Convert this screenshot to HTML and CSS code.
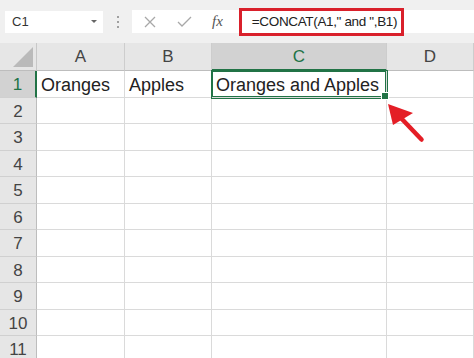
FILE: index.html
```html
<!DOCTYPE html>
<html lang="en">
  <head>
    <meta charset="UTF-8" />
    <meta name="viewport" content="width=device-width, initial-scale=1.0" />
    <title>CONCAT example</title>
    <link rel="stylesheet" href="styles.css">
  </head>
  <body>
    <!-- name box + formula bar -->
    <div class="toolbar">
      <div class="name-box">
        <span>C1</span>
        <span class="caret"></span>
      </div>
      <div class="grip"><i></i><i></i><i></i></div>
      <div class="formula-bar">
        <svg class="icon-cancel" width="12" height="12" viewBox="0 0 12 12">
          <path d="M1 1 L11 11 M11 1 L1 11" stroke="#a8a8a8" stroke-width="1.3" fill="none" />
        </svg>
        <svg class="icon-enter" width="15" height="11" viewBox="0 0 15 11">
          <path d="M1 6 L5 10 L14 1" stroke="#a8a8a8" stroke-width="1.3" fill="none" />
        </svg>
        <span class="fx">fx</span>
        <div class="formula">=CONCAT(A1," and ",B1)</div>
      </div>
    </div>

    <!-- sheet grid -->
    <div class="sheet">
      <div class="corner"></div>
      <div class="col-head">A</div>
      <div class="col-head">B</div>
      <div class="col-head selected">C</div>
      <div class="col-head">D</div>

      <div class="row-head selected">1</div>
      <div class="cell">Oranges</div>
      <div class="cell">Apples</div>
      <div class="cell active">Oranges and Apples</div>
      <div class="cell"></div>

      <div class="row-head">2</div><div class="cell"></div><div class="cell"></div><div class="cell"></div><div class="cell"></div>
      <div class="row-head">3</div><div class="cell"></div><div class="cell"></div><div class="cell"></div><div class="cell"></div>
      <div class="row-head">4</div><div class="cell"></div><div class="cell"></div><div class="cell"></div><div class="cell"></div>
      <div class="row-head">5</div><div class="cell"></div><div class="cell"></div><div class="cell"></div><div class="cell"></div>
      <div class="row-head">6</div><div class="cell"></div><div class="cell"></div><div class="cell"></div><div class="cell"></div>
      <div class="row-head">7</div><div class="cell"></div><div class="cell"></div><div class="cell"></div><div class="cell"></div>
      <div class="row-head">8</div><div class="cell"></div><div class="cell"></div><div class="cell"></div><div class="cell"></div>
      <div class="row-head">9</div><div class="cell"></div><div class="cell"></div><div class="cell"></div><div class="cell"></div>
      <div class="row-head">10</div><div class="cell"></div><div class="cell"></div><div class="cell"></div><div class="cell"></div>
      <div class="row-head">11</div><div class="cell"></div><div class="cell"></div><div class="cell"></div><div class="cell"></div>
    </div>

    <!-- red pointer arrow -->
    <svg class="pointer" width="45" height="45" viewBox="0 0 45 45">
      <polygon points="5,4 30,13 10,25" fill="#e41e26" />
      <line x1="17" y1="17" x2="38.5" y2="39.5" stroke="#e41e26" stroke-width="4.5" stroke-linecap="round" />
    </svg>
  </body>
</html>
```

FILE: styles.css
```css
* {
  box-sizing: border-box;
}

body {
  margin: 0;
  width: 474px;
  height: 358px;
  overflow: hidden;
  position: relative;
  font-family: 'Liberation Sans', Arial, sans-serif;
  background-color: #ffffff;
  color: #222;
}

/* toolbar */
.toolbar {
  display: flex;
  align-items: center;
  height: 43px;
  background-color: #f0f0f0;
  padding-left: 5px;
}

.name-box {
  display: flex;
  align-items: center;
  justify-content: space-between;
  width: 98px;
  height: 22px;
  background-color: #fff;
  padding: 0 6px 0 7px;
  font-size: 13px;
  color: #333;
}

.caret {
  width: 0;
  height: 0;
  border-left: 3px solid transparent;
  border-right: 3px solid transparent;
  border-top: 3px solid #666;
}

.grip {
  display: flex;
  flex-direction: column;
  gap: 3px;
  margin-left: 14px;
}

.grip i {
  display: block;
  width: 2px;
  height: 2px;
  background-color: #a0a0a0;
}

.formula-bar {
  display: flex;
  align-items: center;
  flex: 1;
  height: 23px;
  margin-left: 13px;
  background-color: #fff;
}

.icon-cancel {
  margin-left: 12px;
}

.icon-enter {
  margin-left: 21px;
}

.fx {
  margin-left: 20px;
  font-family: 'Liberation Serif', serif;
  font-style: italic;
  font-size: 15px;
  color: #555;
}

.formula {
  height: 28px;
  width: 165px;
  margin-left: 16px;
  border: 3px solid #d9202b;
  padding-left: 10px;
  font-size: 13.5px;
  letter-spacing: -0.35px;
  line-height: 22px;
  color: #222;
  white-space: nowrap;
}

/* sheet */
.sheet {
  display: grid;
  grid-template-columns: 37px 88px 87px 175px 87px;
  grid-template-rows: 28px;
  grid-auto-rows: 26.5px;
}

.corner,
.col-head,
.row-head {
  background-color: #e6e6e6;
  color: #444;
  font-size: 17px;
}

.corner {
  position: relative;
  border-right: 1px solid #c8c8c8;
  border-bottom: 1px solid #bdbdbd;
}

.corner::after {
  content: '';
  position: absolute;
  right: 3px;
  bottom: 3px;
  width: 0;
  height: 0;
  border-left: 20px solid transparent;
  border-bottom: 20px solid #bababa;
}

.col-head {
  text-align: center;
  line-height: 27px;
  border-right: 1px solid #cdcdcd;
  border-bottom: 1px solid #bdbdbd;
}

.row-head {
  text-align: center;
  padding-top: 2px;
  line-height: 24px;
  border-right: 1px solid #bdbdbd;
  border-bottom: 1px solid #d0d0d0;
}

.col-head.selected {
  background-color: #d2d2d2;
  color: #217346;
  border-bottom: 2px solid #217346;
}

.row-head.selected {
  background-color: #d2d2d2;
  color: #217346;
  border-right: 2px solid #217346;
}

.cell {
  font-size: 18px;
  padding: 2px 0 0 4px;
  line-height: 24px;
  white-space: nowrap;
  border-right: 1px solid #dadada;
  border-bottom: 1px solid #dadada;
}

.cell.active {
  position: relative;
  z-index: 1;
  box-shadow: 0 0 0 1px #217346, inset 0 0 0 1px #217346;
}

.cell.active::after {
  content: '';
  position: absolute;
  right: -3px;
  bottom: -3px;
  width: 6px;
  height: 6px;
  background-color: #217346;
  border: 1px solid #fff;
}

.pointer {
  position: absolute;
  left: 383px;
  top: 100px;
}
```
